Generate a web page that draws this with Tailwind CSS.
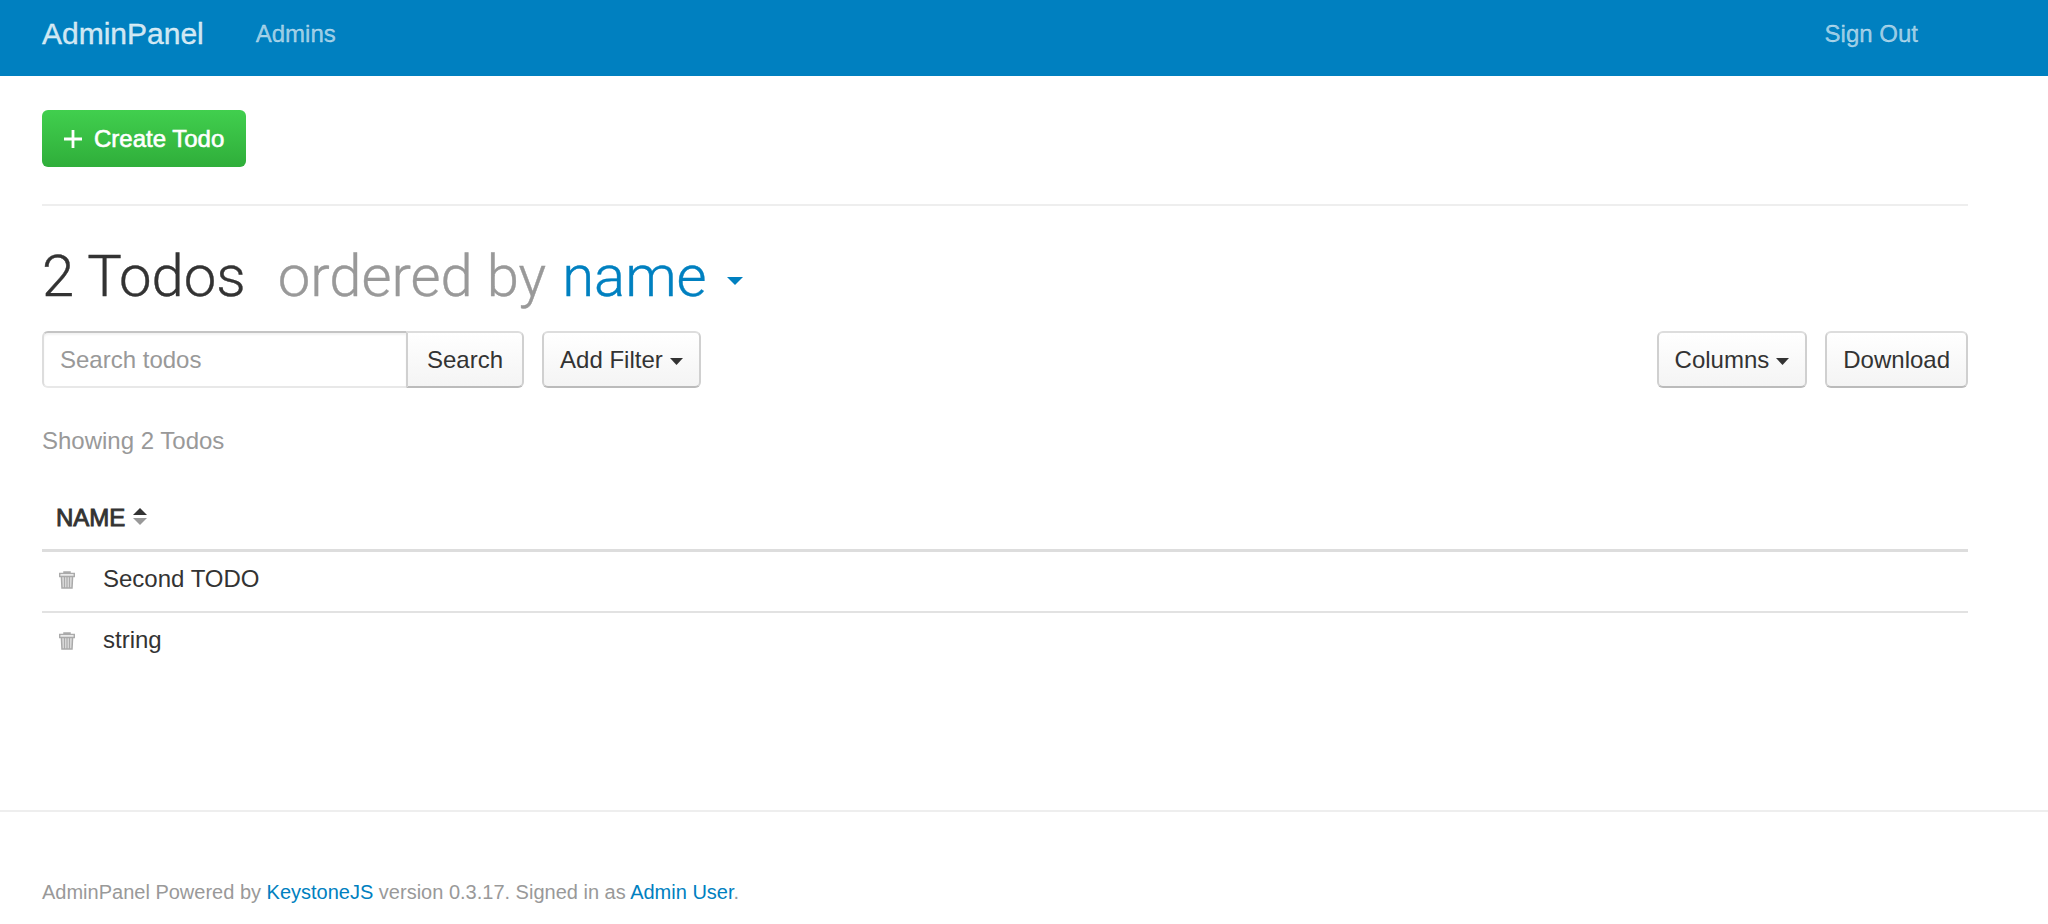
<!DOCTYPE html>
<html lang="en">
<head>
    <meta charset="utf-8">
    <title>AdminPanel</title>
    <script src="https://cdn.jsdelivr.net/npm/@tailwindcss/browser@4"></script>
</head>
<body class="bg-white text-[#333] font-['Liberation_Sans',Arial,sans-serif] text-[24px] leading-[34px]">
    <!-- Top nav -->
    <nav class="flex items-start h-[76px] pt-[17px] pl-[42px] pr-[130px] bg-[#0080c0]">
        <a href="/" class="text-[30px] text-white/80 [-webkit-text-stroke:0.3px]">AdminPanel</a>
        <a href="/admins" class="ml-[52px] text-white/60 [-webkit-text-stroke:0.3px]">Admins</a>
        <a href="/signout" class="ml-auto text-white/60 [-webkit-text-stroke:0.3px]">Sign Out</a>
    </nav>

    <main class="pl-[42px] pr-20 pt-[34px]">
        <button type="button" class="flex items-center h-[57px] px-[22px] gap-3 rounded-md bg-linear-to-b from-[#41cf4e] to-[#2fae3a] text-white [-webkit-text-stroke:0.6px_white]">
            <svg class="w-[18px] h-[18px]" viewBox="0 0 18 18" fill="none" stroke="currentColor" stroke-width="2.8"><path d="M9 0v18M0 9h18"/></svg>
            Create Todo
        </button>

        <hr class="mt-[37px] border-0 h-[2px] bg-[#eee]">

        <h1 class="mt-9 flex items-center font-['Roboto',sans-serif] font-light text-[58px] leading-[68px] [-webkit-text-stroke:0.4px]">
            2 Todos
            <span class="ml-8 text-[#999]">ordered by</span>
            <button type="button" class="ml-4 flex items-center gap-5 text-[#0080c0]">
                name
                <svg class="w-4 h-2 mt-[10px]" viewBox="0 0 16 8" fill="currentColor"><path d="M0 0h16L8 8z"/></svg>
            </button>
        </h1>

        <!-- Search, filters and list actions -->
        <div class="mt-[21px] flex">
            <form class="flex">
                <input type="text" aria-label="Search todos" placeholder="Search todos" class="w-[364px] h-[57px] pl-4 border-2 border-r-0 border-t-[#c4c4c4] border-x-[#ddd] border-b-[#e8e8e8] rounded-l-md bg-white shadow-[inset_0_2px_2px_rgba(0,0,0,0.05)] placeholder:text-[#999]">
                <button type="button" class="h-[57px] px-[19px] border-2 border-t-[#ddd] border-x-[#d0d0d0] border-b-[#bbb] rounded-r-md bg-linear-to-b from-white to-[#f4f4f4]">Search</button>
            </form>
            <button type="button" class="ml-[18px] flex items-center h-[57px] px-4 gap-[7px] border-2 border-t-[#ddd] border-x-[#d0d0d0] border-b-[#bbb] rounded-md bg-linear-to-b from-white to-[#f4f4f4]">
                Add Filter
                <svg class="w-[13px] h-[7px] mt-[3px]" viewBox="0 0 12 7" preserveAspectRatio="none" fill="currentColor"><path d="M0 0h12L6 7z"/></svg>
            </button>
            <button type="button" class="ml-auto flex items-center h-[57px] px-4 gap-[7px] border-2 border-t-[#ddd] border-x-[#d0d0d0] border-b-[#bbb] rounded-md bg-linear-to-b from-white to-[#f4f4f4]">
                Columns
                <svg class="w-[13px] h-[7px] mt-[3px]" viewBox="0 0 12 7" preserveAspectRatio="none" fill="currentColor"><path d="M0 0h12L6 7z"/></svg>
            </button>
            <button type="button" class="ml-[18px] h-[57px] px-4 border-2 border-t-[#ddd] border-x-[#d0d0d0] border-b-[#bbb] rounded-md bg-linear-to-b from-white to-[#f4f4f4]">Download</button>
        </div>

        <p class="mt-9 text-[#999]">Showing 2 Todos</p>

        <table class="mt-8 w-full border-separate border-spacing-0 text-left">
            <thead>
                <tr>
                    <th colspan="2" class="pl-[14px] pt-[11px] pb-[14px] border-b-3 border-[#ddd] font-normal [-webkit-text-stroke:0.9px_#333]">
                        <span class="flex items-center gap-2">
                            NAME
                            <svg class="w-[14px] h-[17px] mb-1" viewBox="0 0 14 17"><path d="M7 0l7 7H0z" fill="#333"/><path d="M0 10h14l-7 7z" fill="#999"/></svg>
                        </span>
                    </th>
                </tr>
            </thead>
            <tbody>
                <tr>
                    <td class="w-[61px] pl-[17px] pt-[11px] pb-[14px] border-b-2 border-[#e2e2e2]">
                        <button type="button" aria-label="Delete Second TODO" class="block">
                            <svg class="w-4 h-[18px]" viewBox="0 0 16 18" fill="none" stroke="#aaa" stroke-width="1.5"><path d="M5 1.7V1h6v.7M.7 2.5h14.6v3H.7z"/><path d="M2.4 5.5l.6 11.5h10l.6-11.5z" fill="#ddd"/><path d="M5.5 6v11M8 6v11M10.5 6v11" stroke-width="1.2"/></svg>
                        </button>
                    </td>
                    <td class="pt-[10px] pb-[15px] border-b-2 border-[#e2e2e2]"><a href="/todos/2">Second TODO</a></td>
                </tr>
                <tr>
                    <td class="pl-[17px] pt-[11px] pb-[14px]">
                        <button type="button" aria-label="Delete string" class="block">
                            <svg class="w-4 h-[18px]" viewBox="0 0 16 18" fill="none" stroke="#aaa" stroke-width="1.5"><path d="M5 1.7V1h6v.7M.7 2.5h14.6v3H.7z"/><path d="M2.4 5.5l.6 11.5h10l.6-11.5z" fill="#ddd"/><path d="M5.5 6v11M8 6v11M10.5 6v11" stroke-width="1.2"/></svg>
                        </button>
                    </td>
                    <td class="pt-[10px] pb-[15px]"><a href="/todos/1">string</a></td>
                </tr>
            </tbody>
        </table>
    </main>

    <footer class="mt-[138px] border-t-2 border-[#eee] pl-[42px] pr-20 pt-[65px] text-[20px] leading-[30px] text-[#999]">
        AdminPanel Powered by <a href="http://keystonejs.com" class="text-[#0080c0]">KeystoneJS</a> version 0.3.17. Signed in as <a href="/admins/me" class="text-[#0080c0]">Admin User</a>.
    </footer>
</body>
</html>
